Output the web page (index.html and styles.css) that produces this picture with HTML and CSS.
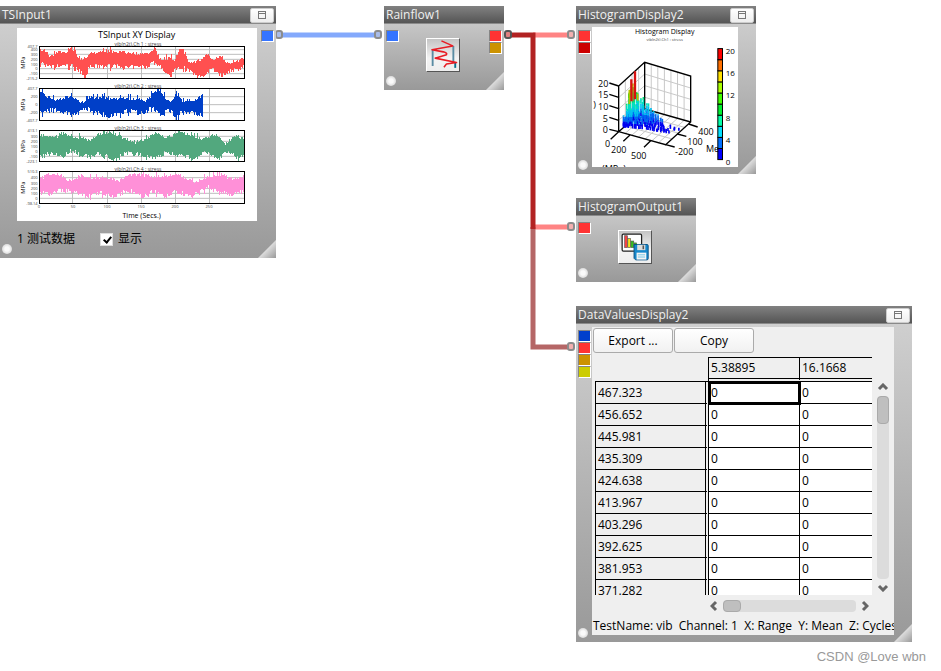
FILE: index.html
```html
<!DOCTYPE html>
<html lang="zh-CN">
<head>
    <meta charset="UTF-8">
    <title>Rainflow</title>
    <link rel="stylesheet" href="styles.css">
</head>
<body>
<main class="canvas">
    <svg class="wires" width="941" height="671">
        <path class="wire blue" d="M279 35H379"/>
        <path class="wire pink" d="M533 35H571M533 227H571"/>
        <path class="wire dusty" d="M533 227V347H571"/>
        <path class="wire dark" d="M507 35H533V229"/>
        <g class="plug plug-blue">
            <rect x="276" y="31" width="6" height="7" rx="2"/>
            <rect x="375" y="31" width="6" height="7" rx="2"/>
        </g>
        <g class="plug plug-dark">
            <rect x="505" y="31" width="6" height="7" rx="2"/>
        </g>
        <g class="plug plug-red">
            <rect x="568" y="31" width="6" height="7" rx="2"/>
            <rect x="568" y="223" width="6" height="7" rx="2"/>
            <rect x="568" y="343" width="6" height="7" rx="2"/>
        </g>
    </svg>

    <section class="node node-input">
        <header class="title">
            <span>TSInput1</span>
            <button type="button" class="max" aria-label="Maximize"></button>
        </header>
        <div class="body">
            <div class="rail"></div>
            <div class="content">
                <svg class="series" id="series" viewBox="51 84 720 579"></svg>
                <div class="options">
                    <span class="count">1 测试数据</span>
                    <input type="checkbox" id="show" checked>
                    <label for="show">显示</label>
                </div>
            </div>
            <div class="rail rail-right"><i class="port light-blue"></i></div>
        </div>
        <i class="lamp"></i><i class="grip"></i>
    </section>

    <section class="node node-rainflow">
        <header class="title"><span>Rainflow1</span></header>
        <div class="body">
            <div class="rail"><i class="port light-blue"></i></div>
            <div class="content middle">
                <svg class="icon" width="34" height="34" viewBox="0 0 102 102">
                    <g fill="none">
                        <path d="M18 34V86" stroke="#5a8ca3" stroke-width="6"/>
                        <path d="M84 22V76" stroke="#5a8ca3" stroke-width="6"/>
                        <path d="M90 76V92" stroke="#08718f" stroke-width="6"/>
                        <path d="M46 6L82 22L16 34L52 41Q66 45 62 50L26 61L94 75L62 80L54 90" stroke="#e81c24" stroke-width="5" stroke-linejoin="round"/>
                    </g>
                </svg>
            </div>
            <div class="rail rail-right"><i class="port red"></i><i class="port amber"></i></div>
        </div>
        <i class="lamp"></i><i class="grip"></i>
    </section>

    <section class="node node-histogram">
        <header class="title">
            <span>HistogramDisplay2</span>
            <button type="button" class="max" aria-label="Maximize"></button>
        </header>
        <div class="body">
            <div class="rail"><i class="port red"></i><i class="port deep-red"></i></div>
            <div class="content">
                <svg class="histogram" id="histogram" viewBox="66 81 438 420"></svg>
            </div>
            <div class="rail rail-right"></div>
        </div>
        <i class="lamp"></i><i class="grip"></i>
    </section>

    <section class="node node-output">
        <header class="title"><span>HistogramOutput1</span></header>
        <div class="body">
            <div class="rail"><i class="port red"></i></div>
            <div class="content middle">
                <svg class="icon" width="34" height="34" viewBox="0 0 102 102">
                    <rect x="10" y="10" width="62" height="54" rx="4" fill="#fff" stroke="#222" stroke-width="4"/>
                    <g stroke="#555" stroke-width="2">
                        <rect x="18" y="15" width="9" height="38" fill="#f24444"/>
                        <rect x="28" y="24" width="9" height="29" fill="#f2e21c"/>
                        <rect x="38" y="32" width="9" height="21" fill="#35c51c"/>
                        <rect x="48" y="38" width="8" height="15" fill="#35c51c"/>
                    </g>
                    <path d="M48 43H90Q93 43 93 47V88Q93 92 89 92H53L48 87Z" fill="#1689cc" stroke="#075083" stroke-width="3"/>
                    <rect x="58" y="44" width="26" height="17" fill="#ddd"/>
                    <rect x="75" y="46" width="5" height="12" fill="#555"/>
                    <rect x="56" y="69" width="31" height="22" fill="#f5f5f5"/>
                    <path d="M60 76H83M60 83H83" stroke="#6cc4e8" stroke-width="3"/>
                </svg>
            </div>
            <div class="rail rail-right"></div>
        </div>
        <i class="lamp"></i><i class="grip"></i>
    </section>

    <section class="node node-values">
        <header class="title">
            <span>DataValuesDisplay2</span>
            <button type="button" class="max" aria-label="Maximize"></button>
        </header>
        <div class="body">
            <div class="rail">
                <i class="port blue"></i><i class="port red"></i><i class="port amber"></i><i class="port yellow"></i>
            </div>
            <div class="content panel">
                <div class="toolbar">
                    <button type="button">Export ...</button>
                    <button type="button">Copy</button>
                </div>
                <div class="sheet">
                    <div class="viewport">
                        <table>
                            <thead>
                            <tr><td class="corner"></td><th>5.38895</th><th>16.1668</th></tr>
                            </thead>
                            <tbody id="values"></tbody>
                        </table>
                    </div>
                    <div class="scroll scroll-y">
                        <button type="button" aria-label="Up"><svg width="12" height="8"><path d="M2 6L6 2L10 6"/></svg></button>
                        <div class="track"><div class="thumb"></div></div>
                        <button type="button" aria-label="Down"><svg width="12" height="8"><path d="M2 2L6 6L10 2"/></svg></button>
                    </div>
                    <div class="scroll scroll-x">
                        <button type="button" aria-label="Left"><svg width="8" height="12"><path d="M6 2L2 6L6 10"/></svg></button>
                        <div class="track"><div class="thumb"></div></div>
                        <button type="button" aria-label="Right"><svg width="8" height="12"><path d="M2 2L6 6L2 10"/></svg></button>
                    </div>
                </div>
                <div class="status">TestName: vib&nbsp; Channel: 1&nbsp; X: Range&nbsp; Y: Mean&nbsp; Z: Cycles</div>
            </div>
            <div class="rail rail-right"></div>
        </div>
        <i class="lamp"></i><i class="grip"></i>
    </section>

    <div class="watermark">CSDN @Love wbn</div>
</main>
<script src="script.js"></script>
</body>
</html>
```
FILE: styles.css
```css
body {
    margin: 0;
    background: #fff;
    color: #000;
    font: 12px/16px "Open Sans", "Noto Sans", "Noto Sans CJK SC", sans-serif;
}
button {
    font: inherit;
    color: inherit;
    padding: 0;
}
.canvas {
    position: relative;
    min-height: 100vh;
    overflow: hidden;
}
.wires {
    position: absolute;
    left: 0;
    top: 0;
}
.wire {
    fill: none;
    stroke-width: 5;
}
.wire.blue { stroke: #84a9fc; }
.wire.pink { stroke: #ff8484; }
.wire.dusty { stroke: #b56666; }
.wire.dark { stroke: #b22222; }
.plug rect {
    stroke: #8c8c8c;
    stroke-width: 2;
}
.plug-blue rect { fill: #a9bce8; }
.plug-red rect { fill: #f4b0b0; }
.plug-dark rect {
    fill: #e08080;
    stroke: #555;
}

/* nodes */
.node {
    position: absolute;
    display: flex;
    flex-direction: column;
    background: linear-gradient(#d2d2d2, #999);
}
.node-input { left: 0; top: 6px; width: 276px; }
.node-rainflow { left: 384px; top: 6px; width: 120px; min-height: 84px; }
.node-histogram { left: 576px; top: 6px; width: 180px; }
.node-output { left: 576px; top: 198px; width: 120px; min-height: 84px; }
.node-values { left: 576px; top: 306px; width: 336px; }
.title {
    display: flex;
    align-items: center;
    justify-content: space-between;
    height: 16px;
    padding: 1px 2px 0;
    border-bottom: 1px solid #8a8a8a;
    background: linear-gradient(#818181, #555);
    color: #f0f0f0;
}
.max {
    width: 24px;
    height: 15px;
    display: flex;
    align-items: center;
    justify-content: center;
    border: 1px solid #ccc;
    border-radius: 2px;
    background: linear-gradient(#fff, #eee);
}
.max::before {
    content: "";
    width: 6px;
    height: 4px;
    border: 1px solid #777;
    border-top-width: 3px;
    border-top-style: double;
}
.body {
    display: flex;
    flex: 1;
}
.rail {
    width: 14px;
    padding: 6px 0 0 2px;
}
.rail-right {
    width: 15px;
    padding-left: 3px;
}
.node-input .rail { width: 15px; }
.node-input .rail-right {
    width: 15px;
    padding-left: 4px;
}
.content {
    flex: 1;
    min-width: 0;
    padding: 3px 0 7px;
}
.middle {
    display: flex;
    align-items: center;
    justify-content: center;
}
.port {
    display: block;
    box-sizing: border-box;
    width: 13px;
    height: 12px;
    border: 1px solid;
    border-color: #858585 #fff #fff #858585;
}
.light-blue { background: #3474ff; }
.blue { background: #003fcc; }
.red { background: #ff3333; }
.deep-red { background: #cc0000; }
.amber { background: #cc9200; }
.yellow { background: #cccc00; }
.lamp {
    position: absolute;
    left: 2px;
    bottom: 4px;
    width: 10px;
    height: 10px;
    border-radius: 5px;
    background: radial-gradient(#fafafa 30%, #c4c4c4);
}
.grip {
    position: absolute;
    right: 0;
    bottom: 0;
    width: 18px;
    height: 18px;
    clip-path: polygon(100% 0, 100% 100%, 0 100%);
    background: linear-gradient(135deg, #f2f2f2 35%, #999);
}
.icon {
    box-sizing: border-box;
    border: 1px solid;
    border-color: #fff #555 #555 #fff;
    background: linear-gradient(#c4c4c4, #f4f4f4 60%, #eee);
}

/* time series */
.series {
    display: block;
    width: 100%;
    background: #fff;
}
.node-input .content { padding: 4px 0; }
svg text {
    font-family: "Open Sans", "Noto Sans", sans-serif;
}
.t-title { font-size: 27px; }
.t-axis { font-size: 21px; }
.t-unit { font-size: 18px; }
.t-sub { font-size: 15px; fill: #444; }
.t-tick { font-size: 12px; fill: #444; }
.t-scale { font-size: 24px; }
.t-head { font-size: 21px; }
.t-mini { font-size: 12px; fill: #444; }
.grid {
    fill: none;
    stroke: #bebebe;
    stroke-width: 3;
}
.frame {
    fill: none;
    stroke: #000;
    stroke-width: 3;
}
.options {
    display: flex;
    align-items: center;
    height: 30px;
    padding-top: 3px;
}
.count {
    width: 83px;
}
.options input {
    appearance: none;
    position: relative;
    width: 13px;
    height: 13px;
    margin: 0 5px 0 0;
    border: 1px solid #ddd;
    background: #fff;
}
.options input:checked::after {
    content: "";
    position: absolute;
    left: 4px;
    top: 1px;
    width: 3px;
    height: 6px;
    border: solid #000;
    border-width: 0 2px 2px 0;
    transform: rotate(40deg);
}

/* histogram */
.histogram {
    display: block;
    width: 100%;
    background: #fff;
}
.box-line {
    fill: none;
    stroke: #000;
    stroke-width: 4;
}
.box-grid {
    fill: none;
    stroke: #c8c8c8;
    stroke-width: 3;
}

/* data values */
.node-values .content { padding-top: 3px; }
.panel {
    background: #efefef;
    background-clip: content-box;
}
.toolbar {
    display: flex;
    gap: 1px;
    padding: 1px 1px 4px;
}
.toolbar button {
    box-sizing: border-box;
    width: 80px;
    height: 25px;
    border: 1px solid #aaa;
    border-radius: 3px;
    background: linear-gradient(#fff, #f1f1f1);
}
.sheet {
    display: grid;
    grid-template-columns: 1fr 22px;
    grid-template-rows: 238px 20px;
    padding-left: 3px;
}
.viewport {
    overflow: hidden;
}
table {
    width: 296px;
    table-layout: fixed;
    border-collapse: separate;
    border-spacing: 0;
}
th, td {
    box-sizing: border-box;
    height: 22px;
    padding: 0 2px;
    border: solid #000;
    border-width: 0 1px 1px 0;
    background: #fff;
    text-align: left;
    font-weight: normal;
}
th {
    background: #efefef;
}
thead th {
    height: 25px;
    border-top-width: 1px;
    border-bottom: 4px double #000;
}
thead .corner {
    width: 114px;
    background: none;
}
tbody th {
    border-left-width: 1px;
    border-right: 4px double #000;
}
.selected {
    outline: 3px solid #000;
    outline-offset: -2px;
}
.scroll {
    display: flex;
    align-items: center;
}
.scroll button {
    display: flex;
    border: none;
    background: none;
}
.scroll path {
    fill: none;
    stroke: #666;
    stroke-width: 3;
}
.scroll-y {
    flex-direction: column;
    gap: 5px;
    padding: 26px 0 3px;
}
.scroll-x {
    gap: 5px;
    padding: 2px 3px 0 115px;
}
.track {
    flex: 1;
    border-radius: 4px;
    background: #dcdcdc;
}
.scroll-y .track { width: 12px; }
.scroll-x .track { height: 12px; }
.thumb {
    box-sizing: border-box;
    border: 1px solid #aaa;
    border-radius: 4px;
    background: #bfbfbf;
}
.scroll-y .thumb { height: 28px; }
.scroll-x .thumb {
    width: 18px;
    height: 12px;
}
.status {
    padding: 3px 1px 1px;
    white-space: nowrap;
    overflow: hidden;
}
.watermark {
    position: absolute;
    right: 15px;
    bottom: 6px;
    color: #999;
    font: 13px/16px "Liberation Sans", sans-serif;
}
```
FILE: script.js
```js
// small fixed-seed generator so every load draws the same data
let seed = 7;
function rnd() {
    seed = (seed * 16807) % 2147483647;
    return seed / 2147483647;
}

// linear interpolation in a list of [x, y]
function at(points, x) {
    for (let i = 1; i < points.length; i++) {
        if (x <= points[i][0]) {
            const [x0, y0] = points[i - 1];
            const [x1, y1] = points[i];
            return y0 + (y1 - y0) * (x - x0) / (x1 - x0);
        }
    }
    return points[points.length - 1][1];
}

const charts = [
    {
        y: 139.5, h: 96, color: '#ff5050', end: 733,
        grid: [149, 163, 178, 192, 206, 221],
        ticks: ['407.7', '400', '300', '200', '100', '0', '-100', '-215.2'],
        top: [[120, 150], [132, 146], [150, 168], [165, 162], [180, 150], [190, 155], [202, 158], [215, 140], [235, 168], [252, 180], [268, 156], [320, 152], [400, 156], [440, 163], [465, 143], [480, 175], [500, 173], [525, 175], [540, 145], [556, 158], [568, 185], [600, 180], [620, 158], [640, 182], [662, 162], [680, 186], [710, 184], [733, 168]],
        low: [[120, 190], [150, 206], [200, 200], [225, 202], [255, 234], [270, 204], [330, 200], [380, 207], [440, 205], [460, 190], [480, 205], [512, 230], [530, 206], [555, 206], [590, 234], [615, 230], [635, 206], [665, 232], [690, 216], [733, 206]]
    },
    {
        y: 265.5, h: 96, color: '#003fc8', end: 608,
        grid: [290, 314, 338],
        ticks: ['407.7', '200', '0', '-200', '-407.7'],
        top: [[120, 270], [132, 282], [150, 292], [175, 298], [200, 290], [225, 294], [250, 306], [265, 290], [300, 292], [350, 292], [400, 296], [440, 300], [460, 278], [480, 266], [495, 292], [515, 304], [527, 280], [545, 298], [575, 300], [595, 294], [608, 286]],
        low: [[120, 345], [135, 334], [160, 332], [200, 342], [235, 347], [255, 327], [290, 340], [325, 353], [355, 343], [400, 333], [420, 345], [460, 327], [485, 350], [505, 332], [530, 353], [550, 337], [575, 343], [608, 350]]
    },
    {
        y: 391.5, h: 93, color: '#52a87e', end: 733,
        grid: [409, 424, 440, 455, 469],
        ticks: ['413.1', '300', '200', '100', '0', '-100', '-223.1'],
        top: [[120, 402], [145, 408], [170, 408], [190, 396], [220, 408], [250, 412], [270, 420], [296, 400], [340, 398], [370, 412], [405, 425], [440, 416], [465, 397], [500, 410], [540, 395], [570, 402], [605, 415], [650, 400], [675, 430], [700, 410], [733, 413]],
        low: [[120, 476], [150, 464], [190, 474], [215, 456], [270, 476], [300, 464], [342, 484], [380, 462], [430, 470], [470, 478], [500, 460], [550, 474], [580, 478], [620, 460], [655, 482], [680, 458], [715, 478], [733, 476]]
    },
    {
        y: 514.5, h: 96, color: '#ff90d8', end: 733,
        grid: [533, 549, 565, 580, 595],
        ticks: ['510.3', '400', '300', '200', '100', '0', '-98.14'],
        top: [[120, 535], [145, 520], [175, 520], [200, 538], [220, 540], [245, 524], [280, 532], [320, 530], [355, 540], [390, 524], [425, 522], [460, 530], [500, 524], [540, 524], [580, 545], [600, 543], [625, 528], [660, 522], [700, 534], [733, 526]],
        low: [[120, 582], [150, 586], [180, 572], [225, 580], [260, 594], [300, 580], [345, 594], [385, 574], [425, 592], [460, 578], [495, 594], [530, 578], [570, 592], [600, 580], [625, 566], [660, 576], [690, 588], [733, 580]]
    }
];

function drawSeries() {
    let out = '<text class="t-title" x="410" y="114" text-anchor="middle">TSInput XY Display</text>';
    charts.forEach((c, i) => {
        const bottom = c.y + c.h;
        let grid = '';
        for (const x of [217.5, 322.5, 424.5, 526.5, 628.5]) {
            grid += `M${x} ${c.y}V${bottom}`;
        }
        for (const y of c.grid) {
            grid += `M118 ${y}H733`;
        }
        out += `<path class="grid" d="${grid}"/>`;

        // one bar per pixel column
        let wave = '';
        for (let x = 121.5; x <= c.end; x += 3) {
            const spike = rnd() < 0.1 ? 10 : 0;
            const a = Math.max(c.y + 1, at(c.top, x) - 3 + rnd() * 10 - spike);
            const b = Math.min(bottom - 1, at(c.low, x) + 3 - rnd() * 14 + spike);
            wave += `M${x} ${a.toFixed(1)}V${b.toFixed(1)}`;
        }
        out += `<path d="${wave}" stroke="${c.color}" stroke-width="3" shape-rendering="crispEdges"/>`;
        out += `<rect class="frame" x="118.5" y="${c.y}" width="615" height="${c.h}"/>`;
        out += `<text class="t-sub" x="414" y="${c.y - 2}" text-anchor="middle">vib(n2t).Ch ${i + 1} : stress</text>`;
        const mid = c.y + c.h / 2;
        out += `<text class="t-unit" x="74" y="${mid}" text-anchor="middle" transform="rotate(-90 74 ${mid})">MPa</text>`;
        const rows = [c.y, ...c.grid, bottom];
        c.ticks.forEach((t, k) => {
            out += `<text class="t-tick" x="113" y="${rows[k] + 5}" text-anchor="end">${t}</text>`;
        });
    });
    [0, 50, 100, 150, 200, 250].forEach((t, k) => {
        out += `<text class="t-tick" x="${117 + k * 102}" y="625" text-anchor="middle">${t}</text>`;
    });
    out += '<text class="t-axis" x="425" y="654" text-anchor="middle">Time (Secs.)</text>';
    document.getElementById('series').innerHTML = out;
}

const scale = ['#0000ff', '#0070ff', '#00e0ff', '#00ffa8', '#00f030', '#40ff00', '#a8ff00', '#ffe000', '#ff7000', '#ff0000'];
const bars = ['#0000f0', '#0068f0', '#00c0f0', '#00e0c0', '#00e080', '#10e030', '#60d800', '#c0b800', '#d06010', '#d81010'];

function drawHistogram() {
    let out = '<text class="t-head" x="284" y="101" text-anchor="middle">Histogram Display</text>';
    out += '<text class="t-mini" x="284" y="122" text-anchor="middle">vib(n2t).Ch1 : stress</text>';

    // walls and floor
    let grid = '';
    for (let k = 1; k < 7; k++) {
        const x = 224 + k * 138 / 7;
        const y = 187 + k * 41 / 7;
        grid += `M${x} ${y}v139l-78 68`;
    }
    for (let k = 1; k < 4; k++) {
        grid += `M146 ${395 - k * 34}L224 ${327 - k * 35}L362 ${366 - k * 34}`;
        grid += `M${146 + k * 20} ${395 - k * 17}l141 39M${146 + k * 20} ${395 - k * 17}v-138`;
    }
    out += `<path class="box-grid" d="${grid}"/>`;
    out += '<path class="box-line" d="M146 395V258L224 187L362 228V366L287 434L146 395M224 187V327L362 366M224 327L146 395"/>';
    out += '<path class="box-line" d="M146 258L118 249M146 292L118 283M146 326L118 317M146 361L118 352M146 395L118 388M146 395L122 418M180 405L160 424M242 422L222 442M287 434L314 441M322 402L349 409M356 372L383 381"/>';

    const peak = [[158, 18], [164, 50], [168, 80], [175, 100], [184, 110], [195, 110], [203, 88], [215, 74], [230, 58], [250, 46], [262, 34], [275, 26], [285, 16], [325, 12]];
    const back = [[160, 378], [180, 362], [205, 350], [240, 362], [280, 382], [325, 392]];
    const front = [[160, 383], [230, 389], [260, 395], [290, 400], [325, 402]];
    for (let row = 0; row < 5; row++) {
        for (let x = 160; x < 324; x += 6) {
            if (rnd() < (x > 305 ? 0.85 : x > 282 ? 0.75 : x > 262 ? 0.4 : 0.1)) continue;
            const px = x + rnd() * 5;
            const base = at(back, px) + (at(front, px) - at(back, px)) * row / 4;
            const tall = Math.max(9, at(peak, px) * (1 - row * 0.17) * (0.6 + rnd() * 0.4));
            for (let k = 0; k * 14 < tall; k++) {
                const low = base - k * 14;
                const high = Math.max(base - tall, low - 14);
                out += `<path d="M${px.toFixed(1)} ${low.toFixed(1)}V${high.toFixed(1)}" stroke="${bars[Math.min(k, 9)]}" stroke-width="5"/>`;
            }
        }
    }
    // the tallest bins
    out += '<path d="M184 304V238M195 298V214" stroke="#d81010" stroke-width="7"/>';
    out += '<path d="M178 312V270M203 302V282" stroke="#b8c000" stroke-width="5"/>';
    out += '<path d="M189 304V262" stroke="#c06010" stroke-width="4"/>';

    // color bar
    scale.forEach((color, k) => {
        out += `<rect x="443.5" y="${445.5 - k * 33.3}" width="14" height="33.3" fill="${color}" stroke="#000" stroke-width="3"/>`;
    });
    [[20, 162], [16, 228], [12, 294], [8, 363], [4, 429], [0, 495]].forEach(([t, y]) => {
        out += `<text class="t-scale" x="467" y="${y}">${t}</text>`;
    });
    [['20', 84, 260], ['15', 84, 294], ['10', 84, 329], ['5', 98, 366], ['0', 98, 399], ['0', 105, 440],
        ['200', 123, 458], ['500', 183, 476], ['-200', 315, 466], ['100', 352, 434], ['400', 385, 404],
        ['Me', 408, 455], [')', 70, 324], ['(MPa)', 96, 516]].forEach(([t, x, y]) => {
        out += `<text class="t-title" x="${x}" y="${y}">${t}</text>`;
    });
    document.getElementById('histogram').innerHTML = out;
}

const ranges = ['467.323', '456.652', '445.981', '435.309', '424.638', '413.967', '403.296', '392.625', '381.953', '371.282'];

function drawValues() {
    let rows = '';
    ranges.forEach((r, i) => {
        rows += `<tr><th>${r}</th><td${i === 0 ? ' class="selected"' : ''}>0</td><td>0</td></tr>`;
    });
    document.getElementById('values').innerHTML = rows;
}

drawSeries();
drawHistogram();
drawValues();
```
